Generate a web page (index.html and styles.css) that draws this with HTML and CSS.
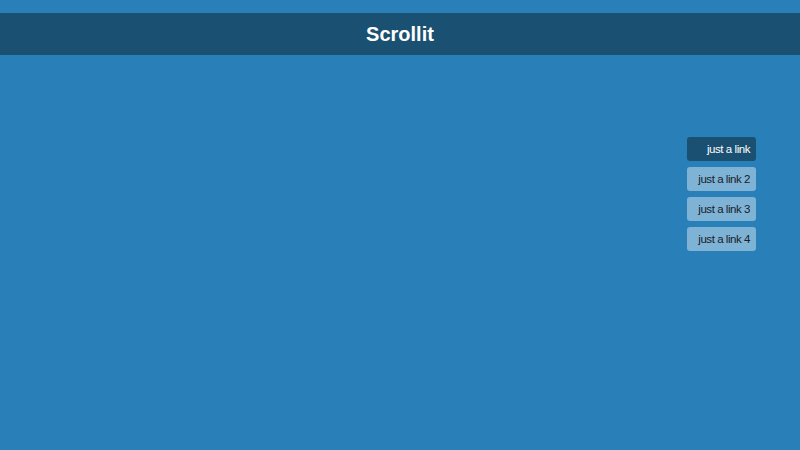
FILE: index.html
```html
<!DOCTYPE html>
<html lang="en">
<head>
<meta charset="utf-8">
<title>Scrollit</title>
<link rel="stylesheet" href="styles.css">
</head>
<body>
  <header class="topbar">
    <h1 class="title">Scrollit</h1>
  </header>
  <nav class="side-nav">
    <a class="nav-link active" href="#s1">just a link</a>
    <a class="nav-link" href="#s2">just a link 2</a>
    <a class="nav-link" href="#s3">just a link 3</a>
    <a class="nav-link" href="#s4">just a link 4</a>
  </nav>
</body>
</html>
```
FILE: styles.css
```css
html, body {
  margin: 0;
  height: 100%;
}

body {
  background: #2980b9;
  font-family: "Liberation Sans", Arial, sans-serif;
  padding-top: 13px;
  box-sizing: border-box;
  overflow: hidden;
}

.topbar {
  background: #1a5172;
  height: 42px;
  display: flex;
  align-items: center;
  justify-content: center;
}

.title {
  margin: 0;
  color: #ffffff;
  font-size: 20px;
  font-weight: bold;
}

.side-nav {
  display: flex;
  flex-direction: column;
  align-items: flex-end;
  gap: 6px;
  margin-top: 82px;
  margin-right: 44px;
}

.nav-link {
  width: 69px;
  height: 24px;
  box-sizing: border-box;
  padding-right: 6px;
  display: flex;
  align-items: center;
  justify-content: flex-end;
  border-radius: 3px;
  background: #7fb3d5;
  color: #17202a;
  font-size: 11.5px;
  letter-spacing: -0.45px;
  text-decoration: none;
  white-space: nowrap;
}

.nav-link.active {
  background: #1a5172;
  color: #ffffff;
}
```
